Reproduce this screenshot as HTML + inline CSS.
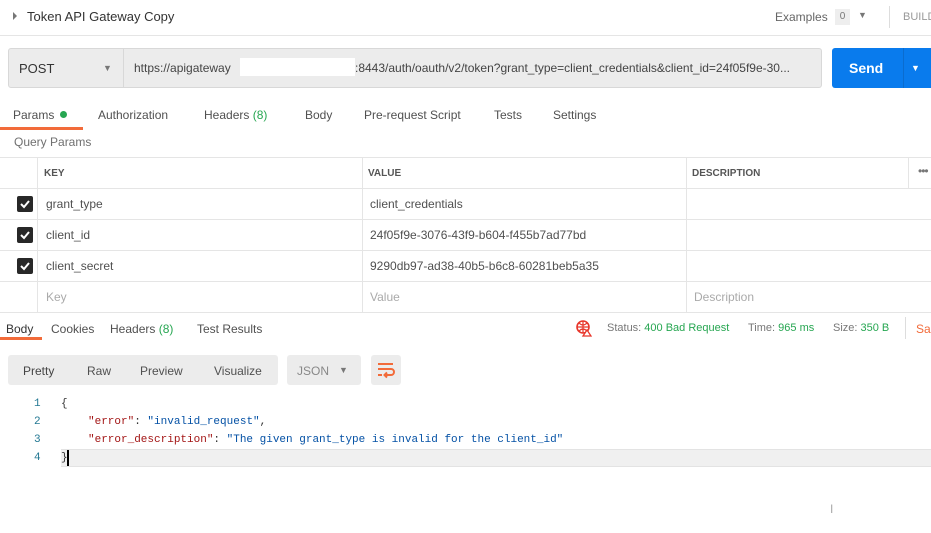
<!DOCTYPE html>
<html><head><style>
*{margin:0;padding:0;box-sizing:border-box}
body{width:931px;height:533px;overflow:hidden;background:#fff;font-family:"Liberation Sans",sans-serif;font-size:12px;color:#505050;position:relative}
.a{position:absolute;white-space:nowrap}
.g{color:#26a651}
.mono{font-family:"Liberation Mono",monospace;font-size:11px}
.cb{position:absolute;left:17px;width:16px;height:16px;background:#282828;border-radius:2px}
.cb svg{position:absolute;left:2px;top:2px}
.hl{position:absolute;background:#e0e0e0}
</style></head><body>
<div class="a" style="left:13px;top:12px;width:0;height:0;border-left:4px solid #777;border-top:4px solid transparent;border-bottom:4px solid transparent"></div>
<div class="a" style="left:27px;top:9px;font-size:13px;color:#333">Token API Gateway Copy</div>
<div class="a" style="left:775px;top:10px;color:#666">Examples</div>
<div class="a" style="left:835px;top:9px;width:15px;height:16px;background:#eee;font-size:10px;text-align:center;line-height:16px;color:#777">0</div>
<div class="a" style="left:858px;top:10px;font-size:9px;color:#777">▼</div>
<div class="a" style="left:889px;top:6px;width:1px;height:22px;background:#ddd"></div>
<div class="a" style="left:903px;top:11px;font-size:11px;color:#999">BUILD</div>
<div class="a" style="left:0;top:35px;width:931px;height:1px;background:#e5e5e5"></div>

<div class="a" style="left:8px;top:48px;width:814px;height:40px;background:#ececec;border:1px solid #d8d8d8;border-radius:3px"></div>
<div class="a" style="left:123px;top:49px;width:1px;height:38px;background:#d8d8d8"></div>
<div class="a" style="left:19px;top:61px;font-size:13px;color:#333">POST</div>
<div class="a" style="left:103px;top:63px;font-size:9px;color:#777">▼</div>
<div class="a" style="left:134px;top:61px;color:#444">https://apigateway</div>
<div class="a" style="left:240px;top:58px;width:115px;height:18px;background:#fff"></div>
<div class="a" style="left:355px;top:61px;color:#444">:8443/auth/oauth/v2/token?grant_type=client_credentials&amp;client_id=24f05f9e-30...</div>
<div class="a" style="left:832px;top:48px;width:99px;height:40px;background:#097bed;border-radius:3px 0 0 3px"></div>
<div class="a" style="left:903px;top:48px;width:1px;height:40px;background:#0a6ccf"></div>
<div class="a" style="left:849px;top:60px;color:#fff;font-size:14px;font-weight:bold">Send</div>
<div class="a" style="left:911px;top:63px;color:#fff;font-size:9px">▼</div>

<div class="a" style="left:13px;top:108px">Params</div>
<div class="a" style="left:60px;top:111px;width:7px;height:7px;border-radius:50%;background:#26a651"></div>
<div class="a" style="left:98px;top:108px">Authorization</div>
<div class="a" style="left:204px;top:108px">Headers <span class="g">(8)</span></div>
<div class="a" style="left:305px;top:108px">Body</div>
<div class="a" style="left:364px;top:108px">Pre-request Script</div>
<div class="a" style="left:494px;top:108px">Tests</div>
<div class="a" style="left:553px;top:108px">Settings</div>
<div class="a" style="left:0;top:127px;width:83px;height:3px;background:#f26b3a"></div>
<div class="a" style="left:14px;top:135px;color:#707070">Query Params</div>

<div class="a" style="left:0;top:157px;width:931px;height:1px;background:#e5e5e5"></div>
<div class="a" style="left:0;top:188px;width:931px;height:1px;background:#e5e5e5"></div>
<div class="a" style="left:0;top:219px;width:931px;height:1px;background:#e5e5e5"></div>
<div class="a" style="left:0;top:250px;width:931px;height:1px;background:#e5e5e5"></div>
<div class="a" style="left:0;top:281px;width:931px;height:1px;background:#e5e5e5"></div>
<div class="a" style="left:0;top:312px;width:931px;height:1px;background:#e5e5e5"></div>
<div class="a" style="left:37px;top:157px;width:1px;height:155px;background:#e5e5e5"></div>
<div class="a" style="left:362px;top:157px;width:1px;height:155px;background:#e5e5e5"></div>
<div class="a" style="left:686px;top:157px;width:1px;height:155px;background:#e5e5e5"></div>
<div class="a" style="left:908px;top:157px;width:1px;height:31px;background:#e5e5e5"></div>
<div class="a" style="left:44px;top:168px;font-size:10px;font-weight:bold;color:#555">KEY</div>
<div class="a" style="left:368px;top:168px;font-size:10px;font-weight:bold;color:#555">VALUE</div>
<div class="a" style="left:692px;top:168px;font-size:10px;font-weight:bold;color:#555">DESCRIPTION</div>
<div class="a" style="left:918px;top:164px;font-size:12px;color:#777;letter-spacing:-1px">•••</div>

<div class="cb" style="top:196px"><svg width="12" height="12"><path d="M2 6l3 3 5-6" stroke="#fff" stroke-width="2" fill="none"/></svg></div>
<div class="cb" style="top:227px"><svg width="12" height="12"><path d="M2 6l3 3 5-6" stroke="#fff" stroke-width="2" fill="none"/></svg></div>
<div class="cb" style="top:258px"><svg width="12" height="12"><path d="M2 6l3 3 5-6" stroke="#fff" stroke-width="2" fill="none"/></svg></div>
<div class="a" style="left:46px;top:197px">grant_type</div>
<div class="a" style="left:46px;top:228px">client_id</div>
<div class="a" style="left:46px;top:259px">client_secret</div>
<div class="a" style="left:46px;top:290px;color:#aaa">Key</div>
<div class="a" style="left:370px;top:197px">client_credentials</div>
<div class="a" style="left:370px;top:228px">24f05f9e-3076-43f9-b604-f455b7ad77bd</div>
<div class="a" style="left:370px;top:259px">9290db97-ad38-40b5-b6c8-60281beb5a35</div>
<div class="a" style="left:370px;top:290px;color:#aaa">Value</div>
<div class="a" style="left:694px;top:290px;color:#aaa">Description</div>

<div class="a" style="left:6px;top:322px;color:#333">Body</div>
<div class="a" style="left:51px;top:322px">Cookies</div>
<div class="a" style="left:110px;top:322px">Headers <span class="g">(8)</span></div>
<div class="a" style="left:197px;top:322px">Test Results</div>
<div class="a" style="left:0;top:337px;width:42px;height:3px;background:#f26b3a"></div>
<svg class="a" style="left:576px;top:320px" width="16" height="17"><circle cx="7" cy="7" r="6" stroke="#e8362a" stroke-width="1.6" fill="none"/><path d="M1 7h12M7 1v12M3 3q4 4 8 0M3 11q4-4 8 0" stroke="#e8362a" stroke-width="1.2" fill="none"/><path d="M11 10l4 6h-8z" fill="#fff" stroke="#e8362a" stroke-width="1.3"/></svg>
<div class="a" style="left:607px;top:322px;font-size:11px;color:#777">Status: <span class="g">400 Bad Request</span></div>
<div class="a" style="left:748px;top:322px;font-size:11px;color:#777">Time: <span class="g">965 ms</span></div>
<div class="a" style="left:833px;top:322px;font-size:11px;color:#777">Size: <span class="g">350 B</span></div>
<div class="a" style="left:905px;top:317px;width:1px;height:22px;background:#ddd"></div>
<div class="a" style="left:916px;top:322px;color:#f26b3a">Sa</div>

<div class="a" style="left:8px;top:355px;width:270px;height:30px;background:#ececec;border-radius:3px"></div>
<div class="a" style="left:23px;top:364px;color:#444">Pretty</div>
<div class="a" style="left:87px;top:364px">Raw</div>
<div class="a" style="left:140px;top:364px">Preview</div>
<div class="a" style="left:214px;top:364px">Visualize</div>
<div class="a" style="left:287px;top:355px;width:74px;height:30px;background:#ececec;border-radius:3px"></div>
<div class="a" style="left:297px;top:364px;color:#888">JSON</div>
<div class="a" style="left:339px;top:365px;font-size:9px;color:#777">▼</div>
<div class="a" style="left:371px;top:355px;width:30px;height:30px;background:#ececec;border-radius:3px"></div>
<svg class="a" style="left:376px;top:361px" width="20" height="18"><path d="M2 3h15M2 8h13a3 3 0 0 1 0 6h-6M11 11.5l-2.5 2.5 2.5 2.5M2 14h4" stroke="#f26b3a" stroke-width="2" fill="none"/></svg>

<div class="hl" style="left:61px;top:450px;width:870px;height:17px;background:#f0f0f0"></div>
<div class="a" style="left:61px;top:449px;width:870px;height:1px;background:#e3e3e3"></div>
<div class="a" style="left:61px;top:466px;width:870px;height:1px;background:#e3e3e3"></div>
<div class="a mono" style="left:34px;top:398px;color:#237893">1</div>
<div class="a mono" style="left:34px;top:416px;color:#237893">2</div>
<div class="a mono" style="left:34px;top:434px;color:#237893">3</div>
<div class="a mono" style="left:34px;top:452px;color:#237893">4</div>
<div class="a mono" style="left:61px;top:398px;color:#333">{</div>
<div class="a mono" style="left:88px;top:416px"><span style="color:#a31515">"error"</span><span style="color:#333">: </span><span style="color:#0451a5">"invalid_request"</span><span style="color:#333">,</span></div>
<div class="a mono" style="left:88px;top:434px"><span style="color:#a31515">"error_description"</span><span style="color:#333">: </span><span style="color:#0451a5">"The given grant_type is invalid for the client_id"</span></div>
<div class="a mono" style="left:61px;top:452px;color:#333">}</div>
<div class="a" style="left:67px;top:450px;width:1.5px;height:16px;background:#000"></div>
<div class="a" style="left:830px;top:502px;color:#aaa;font-size:12px">I</div>
</body></html>
